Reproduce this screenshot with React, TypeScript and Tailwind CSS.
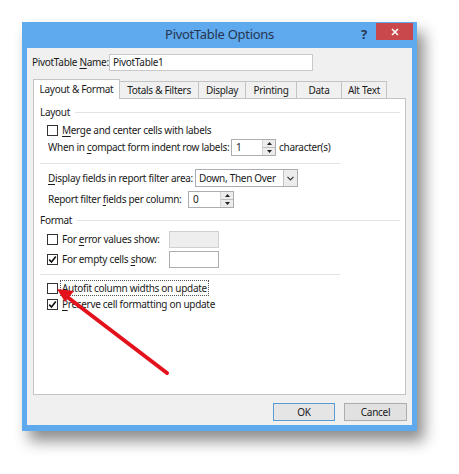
import React from "react";

const font = { fontFamily: '"Noto Sans", "Open Sans", sans-serif' };

function Check({ checked }: { checked?: boolean }) {
  return (
    <div className="w-[11px] h-[11px] border border-[#333] bg-white flex items-center justify-center shrink-0">
      {checked && (
        <svg width="9" height="9" viewBox="0 0 9 9">
          <path d="M1.2 4.6 L3.5 7 L7.8 1.6" fill="none" stroke="#111" strokeWidth="1.6" />
        </svg>
      )}
    </div>
  );
}

function Spin({ value, w }: { value: string; w: string }) {
  return (
    <div className={`${w} h-[17px] border border-[#abadb3] bg-white flex items-stretch shrink-0`}>
      <div className="flex-1 pl-[4px] flex items-center">{value}</div>
      <div className="w-[13px] flex flex-col border-l border-[#d4d4d4]">
        <div className="flex-1 bg-[#ececec] border-b border-[#bdbdbd] flex items-center justify-center">
          <svg width="5" height="3" viewBox="0 0 5 3"><path d="M0 3 L2.5 0 L5 3Z" fill="#222" /></svg>
        </div>
        <div className="flex-1 bg-[#ececec] flex items-center justify-center">
          <svg width="5" height="3" viewBox="0 0 5 3"><path d="M0 0 L2.5 3 L5 0Z" fill="#222" /></svg>
        </div>
      </div>
    </div>
  );
}

function U({ children }: { children: React.ReactNode }) {
  return <span className="underline underline-offset-[2px]">{children}</span>;
}

export default function App() {
  return (
    <div className="w-[459px] h-[474px] bg-white relative overflow-hidden text-[#1a1a1a]" style={font}>
      <div className="ml-[22px] mt-[22px] w-[395px] h-[409px] bg-[#5fa9ef] flex flex-col shadow-[7px_10px_14px_rgba(0,0,0,0.45)]">
        {/* Title bar */}
        <div className="h-[26px] relative flex items-center justify-center">
          <span className="text-[13px] text-[#26374f] tracking-[-0.3px] whitespace-nowrap">PivotTable Options</span>
          <span className="absolute left-[339px] top-[3px] text-[13px] font-bold text-[#26374f]">?</span>
          <div className="absolute left-[354px] top-[1px] w-[37px] h-[17px] bg-[#c9484c] flex items-center justify-center">
            <svg width="8" height="8" viewBox="0 0 8 8">
              <path d="M1 1 L7 7 M7 1 L1 7" stroke="#fff" strokeWidth="1.6" />
            </svg>
          </div>
        </div>
        {/* Client */}
        <div className="mx-[5px] mb-[6px] flex-1 bg-[#f0f0f0] flex flex-col text-[10px] tracking-[-0.3px] whitespace-nowrap">
          {/* Name row */}
          <div className="h-[17px] mt-[6px] flex items-center">
            <span className="ml-[5px] w-[77px] shrink-0">PivotTable <U>N</U>ame:</span>
            <div className="w-[204px] h-[17px] border border-[#c8c8c8] bg-white flex items-center pl-[3px]">PivotTable1</div>
          </div>
          {/* Tabs */}
          <div className="mt-[7px] ml-[6px] flex items-end h-[20px]">
            <div className="w-[87px] h-[20px] bg-white border border-b-0 border-[#c4c4c4] flex items-center justify-center relative z-10 -mb-px pb-[1px]">Layout &amp; Format</div>
            <div className="w-[79px] h-[17px] bg-[#f0f0f0] border border-l-0 border-b-0 border-[#c4c4c4] flex items-center justify-center">Totals &amp; Filters</div>
            <div className="w-[47px] h-[17px] bg-[#f0f0f0] border border-l-0 border-b-0 border-[#c4c4c4] flex items-center justify-center">Display</div>
            <div className="w-[51px] h-[17px] bg-[#f0f0f0] border border-l-0 border-b-0 border-[#c4c4c4] flex items-center justify-center">Printing</div>
            <div className="w-[45px] h-[17px] bg-[#f0f0f0] border border-l-0 border-b-0 border-[#c4c4c4] flex items-center justify-center">Data</div>
            <div className="w-[45px] h-[17px] bg-[#f0f0f0] border border-l-0 border-b-0 border-[#c4c4c4] flex items-center justify-center">Alt Text</div>
          </div>
          {/* Panel */}
          <div className="ml-[6px] w-[373px] h-[297px] bg-white border border-[#c4c4c4] flex flex-col">
            {/* Layout heading */}
            <div className="mt-[5px] h-[16px] flex items-center pl-[6px]">
              <span>Layout</span>
              <div className="ml-[5px] mr-[5px] flex-1 h-px bg-[#e3e3e3]" />
            </div>
            <div className="mt-[2px] h-[16px] flex items-center pl-[13px] gap-[4px]">
              <Check />
              <span><U>M</U>erge and center cells with labels</span>
            </div>
            <div className="mt-[1px] h-[17px] flex items-center pl-[14px]">
              <span className="w-[183px] shrink-0">When in <U>c</U>ompact form indent row labels:</span>
              <Spin value="1" w="w-[45px]" />
              <span className="ml-[3px]">character(s)</span>
            </div>
            <div className="mt-[7px] ml-[6px] w-[300px] h-px bg-[#e3e3e3]" />
            <div className="mt-[5px] h-[18px] flex items-center pl-[14px]">
              <span className="w-[147px] shrink-0"><U>D</U>isplay fields in report filter area:</span>
              <div className="w-[103px] h-[18px] border border-[#abadb3] bg-white flex items-stretch shrink-0">
                <div className="flex-1 pl-[3px] flex items-center">Down, Then Over</div>
                <div className="w-[14px] bg-[#ececec] border-l border-[#c4c4c4] flex items-center justify-center">
                  <svg width="7" height="5" viewBox="0 0 7 5"><path d="M0.5 0.8 L3.5 3.8 L6.5 0.8" fill="none" stroke="#333" strokeWidth="1.2" /></svg>
                </div>
              </div>
            </div>
            <div className="mt-[4px] h-[17px] flex items-center pl-[14px]">
              <span className="w-[140px] shrink-0">Report filter <U>f</U>ields per column:</span>
              <Spin value="0" w="w-[46px]" />
            </div>
            {/* Format heading */}
            <div className="mt-[4px] h-[16px] flex items-center pl-[6px]">
              <span>Format</span>
              <div className="ml-[5px] mr-[5px] flex-1 h-px bg-[#e3e3e3]" />
            </div>
            <div className="mt-[3px] h-[17px] flex items-center pl-[13px]">
              <Check />
              <span className="ml-[4px] w-[107px] shrink-0">For <U>e</U>rror values show:</span>
              <div className="w-[50px] h-[17px] border border-[#d0d0d0] bg-[#eeeeee]" />
            </div>
            <div className="mt-[3px] h-[17px] flex items-center pl-[13px]">
              <Check checked />
              <span className="ml-[4px] w-[107px] shrink-0">For empty cells <U>s</U>how:</span>
              <div className="w-[50px] h-[17px] border border-[#abadb3] bg-white" />
            </div>
            <div className="mt-[6px] ml-[6px] w-[300px] h-px bg-[#e3e3e3]" />
            <div className="mt-[5px] h-[16px] flex items-center pl-[13px]">
              <Check />
              <span className="ml-[2px] px-[1px] border border-dotted border-[#555] leading-[14px]"><U>A</U>utofit column widths on update</span>
            </div>
            <div className="mt-[0px] h-[16px] flex items-center pl-[13px]">
              <Check checked />
              <span className="ml-[4px]"><U>P</U>reserve cell formatting on update</span>
            </div>
          </div>
          {/* Buttons */}
          <div className="mt-[8px] flex justify-end pr-[5px] gap-[9px]">
            <div className="w-[62px] h-[18px] border border-[#5b9bd5] bg-[#e5e5e5] flex items-center justify-center">OK</div>
            <div className="w-[63px] h-[18px] border border-[#adadad] bg-[#e1e1e1] flex items-center justify-center">Cancel</div>
          </div>
        </div>
      </div>
      {/* Red arrow overlay */}
      <svg className="absolute left-0 top-0 pointer-events-none" width="459" height="474" viewBox="0 0 459 474">
        <line x1="167" y1="373" x2="66" y2="296" stroke="#e3111b" strokeWidth="4" strokeLinecap="round" />
        <path d="M57 289 L74 291 L65 302 Z" fill="#e3111b" />
      </svg>
    </div>
  );
}
